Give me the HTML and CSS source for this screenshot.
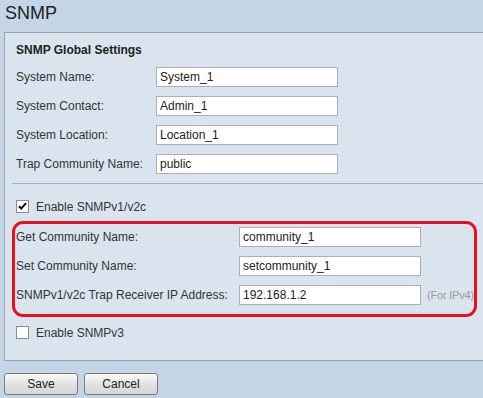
FILE: index.html
```html
<!DOCTYPE html>
<html lang="en">
<head>
  <meta charset="UTF-8" />
  <title>SNMP</title>
  <meta name="viewport" content="width=device-width, initial-scale=1" />
  <link rel="stylesheet" href="styles.css">
</head>
<body>
  <h1 class="title">SNMP</h1>

  <div class="panel">
    <h2 class="section">SNMP Global Settings</h2>

    <div class="rows">
      <div class="row">
        <label class="label" for="sysName">System Name:</label>
        <input class="text" type="text" id="sysName" value="System_1">
      </div>
      <div class="row">
        <label class="label" for="sysContact">System Contact:</label>
        <input class="text" type="text" id="sysContact" value="Admin_1">
      </div>
      <div class="row">
        <label class="label" for="sysLocation">System Location:</label>
        <input class="text" type="text" id="sysLocation" value="Location_1">
      </div>
      <div class="row">
        <label class="label" for="trapName">Trap Community Name:</label>
        <input class="text" type="text" id="trapName" value="public">
      </div>
    </div>

    <hr class="divider">

    <div class="check-row">
      <span class="check">
        <svg width="11" height="11" viewBox="0 0 11 11"><path d="M2 5.2 L4.3 7.6 L9 2.2" fill="none" stroke="#000" stroke-width="2"/></svg>
      </span>
      <span>Enable SNMPv1/v2c</span>
    </div>

    <div class="highlight">
      <div class="row">
        <label class="label wide" for="getName">Get Community Name:</label>
        <input class="text" type="text" id="getName" value="community_1">
      </div>
      <div class="row">
        <label class="label wide" for="setName">Set Community Name:</label>
        <input class="text" type="text" id="setName" value="setcommunity_1">
      </div>
      <div class="row">
        <label class="label wide" for="trapIp">SNMPv1/v2c Trap Receiver IP Address:</label>
        <input class="text" type="text" id="trapIp" value="192.168.1.2">
        <span class="hint">(For IPv4)</span>
      </div>
    </div>

    <div class="check-row v3">
      <span class="check"></span>
      <span>Enable SNMPv3</span>
    </div>
  </div>

  <div class="buttons">
    <button class="button">Save</button>
    <button class="button">Cancel</button>
  </div>
</body>
</html>
```

FILE: styles.css
```css
body {
  margin: 0;
  background-color: #c4d5e6;
  font-family: "Liberation Sans", Arial, sans-serif;
  font-size: 12px;
  color: #333;
  overflow: hidden;
}

.title {
  margin: 0;
  height: 32px;
  line-height: 26px;
  padding-left: 5px;
  font-size: 18px;
  font-weight: normal;
  color: #222;
}

.panel {
  margin-left: 4px;
  border: 1px solid #9aa3ad;
  border-right: none;
  background-color: #dae4ee;
  padding: 9px 0 21px 11px;
}

.section {
  margin: 0 0 9px 0;
  font-size: 12px;
  line-height: 16px;
  font-weight: bold;
  color: #222;
}

.rows {
  display: flex;
  flex-direction: column;
  gap: 9px;
}

.row {
  display: flex;
  align-items: center;
  height: 20px;
  white-space: nowrap;
}

.label {
  width: 140px;
  flex-shrink: 0;
}

.label.wide {
  width: 223px;
}

.text {
  box-sizing: border-box;
  width: 182px;
  height: 20px;
  flex-shrink: 0;
  margin: 0;
  padding: 0 3px;
  border: 1px solid #a9b0b7;
  background: #fff;
  font-family: "Liberation Sans", Arial, sans-serif;
  font-size: 12px;
  color: #222;
}

.hint {
  margin-left: 6px;
  font-size: 11px;
  letter-spacing: -0.2px;
  color: #999;
  flex-shrink: 0;
}

.divider {
  margin: 9px 0 0 -4px;
  border: none;
  border-top: 1px solid #a6afb8;
  height: 0;
}

.check-row {
  display: flex;
  align-items: center;
  gap: 7px;
  margin-top: 16px;
  height: 13px;
}

.check-row.v3 {
  margin-top: 9px;
}

.check {
  box-sizing: border-box;
  width: 13px;
  height: 13px;
  border: 1px solid #8c8c8c;
  background: #fff;
  display: flex;
  align-items: center;
  justify-content: center;
}

.highlight {
  margin: 8px 6px 0 -4px;
  border: 3px solid #e8101e;
  border-radius: 11px;
  padding: 3px 0 9px 1px;
  display: flex;
  flex-direction: column;
  gap: 9px;
}

.buttons {
  display: flex;
  gap: 6px;
  margin: 12px 0 0 4px;
}

.button {
  width: 74px;
  height: 22px;
  border: 1px solid #7a7a7a;
  border-radius: 3px;
  background: linear-gradient(#fbfbfb, #e2e2e2 50%, #d6d6d6);
  font-family: "Liberation Sans", Arial, sans-serif;
  font-size: 12px;
  color: #222;
  cursor: pointer;
}
```
